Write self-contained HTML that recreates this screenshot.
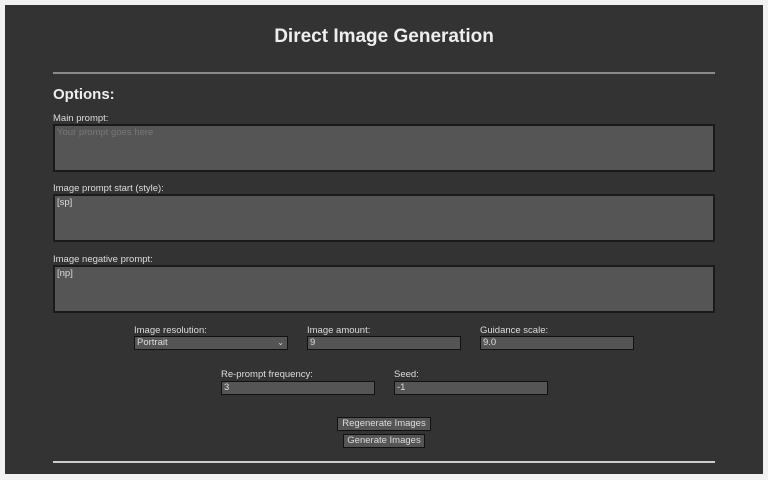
<!DOCTYPE html>
<html><head><meta charset="utf-8"><style>
*{box-sizing:border-box;margin:0;padding:0}
body{width:768px;height:480px;background:#f2f2f2;font-family:"Liberation Sans",sans-serif;position:relative;overflow:hidden}
#p{position:absolute;left:5px;top:5px;width:758px;height:469px;background:#333}
.a{position:absolute}
h1{position:absolute;left:0;width:768px;top:26px;text-align:center;color:#eee;font-size:19px;font-weight:bold}
.hr{position:absolute;left:53px;width:662px;height:2px}
.l{position:absolute;color:#ddd;font-size:9.5px}
.ta{position:absolute;left:53px;width:662px;height:48px;background:#555;border:2px solid #1a1a1a;color:#ddd;font-size:9.5px;padding:1px 2px}
.in{position:absolute;width:154px;height:14px;background:#555;border:1.5px solid #111;color:#ddd;font-size:9.5px;padding:0 2px;line-height:11px}
.b{position:absolute;height:14px;background:#555;border:1.5px solid #111;color:#ddd;font-size:9.5px;text-align:center;line-height:11px}
</style></head><body>
<div id="p"></div>
<h1>Direct Image Generation</h1>
<div class="hr" style="top:72px;background:#8a8a8a"></div>
<div class="a" style="left:53px;top:86px;color:#eee;font-size:15px;font-weight:bold">Options:</div>
<div class="l" style="left:53px;top:113px">Main prompt:</div>
<div class="ta" style="top:124px;color:#777">Your prompt goes here</div>
<div class="l" style="left:53px;top:183px">Image prompt start (style):</div>
<div class="ta" style="top:194px">[sp]</div>
<div class="l" style="left:53px;top:254px">Image negative prompt:</div>
<div class="ta" style="top:265px">[np]</div>
<div class="l" style="left:134px;top:325px">Image resolution:</div>
<div class="in" style="left:134px;top:336px">Portrait<span style="position:absolute;right:3px;font-size:8px">&#8964;</span></div>
<div class="l" style="left:307px;top:325px">Image amount:</div>
<div class="in" style="left:307px;top:336px">9</div>
<div class="l" style="left:480px;top:325px">Guidance scale:</div>
<div class="in" style="left:480px;top:336px">9.0</div>
<div class="l" style="left:221px;top:369px">Re-prompt frequency:</div>
<div class="in" style="left:221px;top:381px">3</div>
<div class="l" style="left:394px;top:369px">Seed:</div>
<div class="in" style="left:394px;top:381px">-1</div>
<div class="b" style="left:337px;top:417px;width:94px">Regenerate Images</div>
<div class="b" style="left:343px;top:434px;width:82px">Generate Images</div>
<div class="hr" style="top:461px;background:#ccc"></div>
</body></html>
